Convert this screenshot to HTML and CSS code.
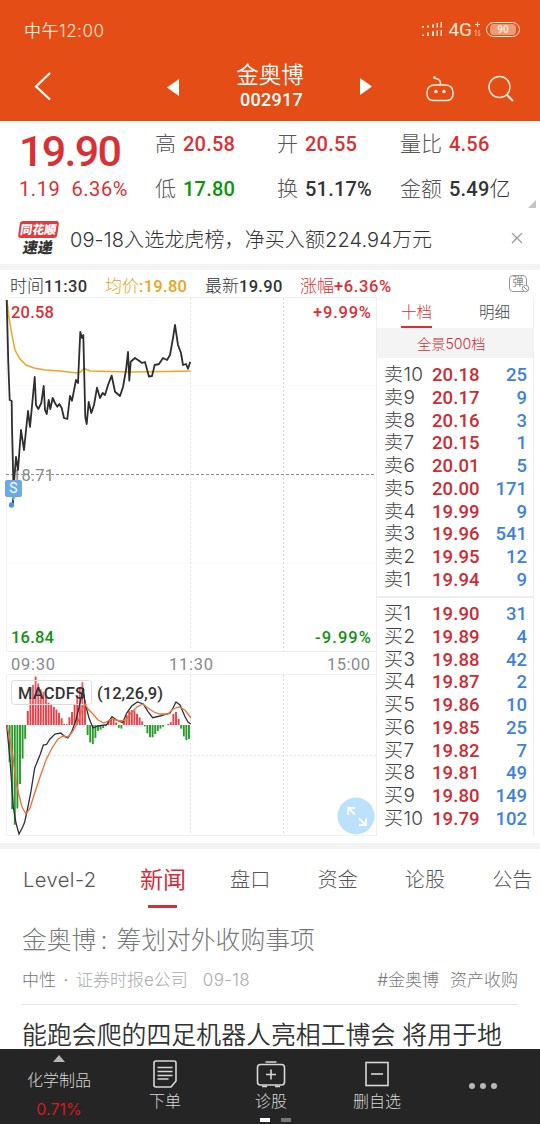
FILE: index.html
```html
<!DOCTYPE html>
<html lang="zh-CN">
<head>
    <meta charset="UTF-8">
    <meta name="viewport" content="width=device-width, initial-scale=1.0">
    <title>金奥博 002917</title>
    <link rel="stylesheet" href="styles.css">
</head>
<body>

<header class="header">
    <div class="status-bar">
        <span class="clock">中午12:00</span>
        <div class="status-icons">
            <svg width="22" height="17" viewBox="0 0 22 17" fill="#ffe9d2">
                <path d="M1 5h2v1.500H1zM6 4.500h2v2H6zM11 3.500h2v3h-2zM15.500 2h1.500v4.500h-1.500zM19.500 1H21v5.500h-1.500zM1 13.500h2V15H1zM6 11.500h2V15H6zM11 10.500h2V15h-2zM15.500 9.500h1.500V15h-1.500zM19.500 9H21v6h-1.500z"/>
            </svg>
            <span class="network">4G</span>
            <svg class="network-plus" width="7" height="17" viewBox="0 0 7 17" fill="none" stroke="#ffe9d2">
                <path d="M3.500 1v5M1 3.500h5" stroke-width="1.200"/>
                <path d="M2 15V9L.500 10.500M5 9v6l1.500-1.500" stroke-width=".7"/>
            </svg>
            <span class="battery"><span>90</span></span>
        </div>
    </div>
    <div class="nav">
        <svg class="back" width="18" height="30" viewBox="0 0 18 30" fill="none" stroke="#fff" stroke-width="2.200">
            <path d="M16 1 2 14.500l14 13"/>
        </svg>
        <svg class="prev" width="12" height="18" viewBox="0 0 12 18" fill="#fff"><path d="M12 0v17L0 8.500z"/></svg>
        <div class="stock">
            <div class="stock-name">金奥博</div>
            <div class="stock-code">002917</div>
        </div>
        <svg class="next" width="12" height="18" viewBox="0 0 12 18" fill="#fff"><path d="M0 0v17l12-8.500z"/></svg>
        <svg class="robot" width="30" height="28" viewBox="0 0 30 28" fill="none" stroke="#ffeadb" stroke-width="1.500">
            <path d="M10 10h10c5 0 8 3 8 8 0 5-2 7.500-6 7.500H8c-4 0-6-2.500-6-7.500 0-5 3-8 8-8zM15.500 10c.5-4-1-6-5-6.500"/>
            <circle cx="9.500" cy="2.500" r="1.500" fill="#ffeadb" stroke="none"/>
            <circle cx="11" cy="16.500" r="1.700" fill="#ffeadb" stroke="none"/>
            <circle cx="19" cy="16.500" r="1.700" fill="#ffeadb" stroke="none"/>
        </svg>
        <svg class="search" width="28" height="28" viewBox="0 0 28 28" fill="none" stroke="#ffeadb" stroke-width="1.500">
            <circle cx="12.500" cy="12" r="10.500"/>
            <path d="m19.500 19.500 6.500 6.500" stroke-width="2"/>
        </svg>
    </div>
</header>

<section class="quote">
    <div class="quote-main">
        <div class="price">19.90</div>
        <div class="change"><span>1.19</span><span>6.36%</span></div>
    </div>
    <div class="quote-grid">
        <div><label>高</label><b class="up">20.58</b></div>
        <div><label>开</label><b class="up">20.55</b></div>
        <div><label>量比</label><b class="up">4.56</b></div>
        <div><label>低</label><b class="down">17.80</b></div>
        <div><label>换</label><b>51.17%</b></div>
        <div><label>金额</label><b>5.49<i>亿</i></b></div>
    </div>
    <span class="corner"></span>
</section>

<section class="notice">
    <div class="badge">
        <span class="badge-top">同花顺</span>
        <span class="badge-bottom">速递</span>
    </div>
    <p class="notice-text">09-18入选龙虎榜，净买入额224.94万元</p>
    <svg width="12" height="12" viewBox="0 0 12 12" fill="none" stroke="#999" stroke-width="1.200"><path d="m1 0 10 10M11 0 1 10"/></svg>
</section>

<div class="divider"></div>

<section class="chart-info">
    <span class="info-time">时间<b>11:30</b></span>
    <span class="info-avg">均价<b>:19.80</b></span>
    <span class="info-last">最新<b>19.90</b></span>
    <span class="info-rate">涨幅<b>+6.36%</b></span>
    <div class="danmu">
        <span>弹</span>
        <svg width="9" height="9" viewBox="0 0 9 9" fill="#fff" stroke="#8f8f8f"><circle cx="4.500" cy="4.500" r="3.200"/><path d="M2.500 2.500l4 4"/></svg>
    </div>
</section>

<section class="market">
    <svg class="chart" width="376" height="546" viewBox="0 297 376 546">
        <!-- frame and grid -->
        <g class="frame">
            <path d="M6.500 297.500V651.500H376M6.500 674.500V835.500H376M6.500 297.500H376M6.500 674.500H376"/>
            <path d="M6 385.500H376M6 563.500H376" class="faint"/>
        </g>
        <g class="grid">
            <path d="M190.500 298V651M190.500 675V835M6 755.500H376"/>
            <path d="M283.500 298V651M283.500 675V835" class="mid"/>
        </g>
        <path class="zero" d="M6 474.500H375"/>

        <text class="t gray" x="12" y="481" textLength="42">18.71</text>

        <!-- intraday price -->
        <polyline class="avg" points="7,300 9,318 12,335 15,350 20,359 26,365 34,368 45,370 60,371 75,372.700 80,372.500 84,368.500 90,371 130,372 165,371.500 190.500,371"/>
        <polyline class="line" points="6.700,300 8.300,363 9.700,400 11.700,401 12,427 13.300,480 13,503 14,483 16,457 18,470 21,430 24,450 28,411 30,427 32.300,403 34.700,377 36,405 38.300,409 41.300,403 43.700,386 45,410 46.700,414 48.700,400 50.300,409 52.700,398 55,403 57.300,406.700 59.300,404 61.700,408 64,418 67.300,419 70,396 72,400.700 76,380 78,383 79,360 80.300,332 82,338 83.300,335 84.700,393 85.300,417 86.700,424 88.700,402 91.300,413 94,405 97,387.700 100,398 102.700,393 105,395 108,385 111.700,375.700 115,391.700 120,396 123,387 126,370 128,352 129.300,380.700 130.700,361.700 135,358 138,360 142,363 145,362 149,376.700 152,376 154.700,365 159,364 163,358 167,360 170,355 173,338 175,325 178,345 181,353 183,365 186,364 188,368.700 190.300,361.700"/>

        <text class="t red" x="11" y="318" textLength="43">20.58</text>
        <text class="t red" x="313" y="318" textLength="58">+9.99%</text>
        <text class="t green" x="11" y="643" textLength="43">16.84</text>
        <text class="t green" x="315" y="643" textLength="56">-9.99%</text>
        <text class="t axis" x="11" y="670" textLength="44">09:30</text>
        <text class="t axis" x="169" y="670" textLength="44">11:30</text>
        <text class="t axis" x="327" y="670" textLength="43">15:00</text>

        <!-- sell marker -->
        <rect x="5" y="480" width="17" height="17" rx="2" fill="#6ba8ec"/>
        <path d="M11 496h5l-2.500 5z" fill="#6ba8ec"/>
        <circle cx="11.500" cy="505" r="2.700" fill="#4d94e0"/>
        <text class="marker" x="13.500" y="493" text-anchor="middle">S</text>

        <!-- MACD -->
        <g id="macdBars"></g>
        <rect x="11.500" y="680.500" width="80" height="24" rx="3" class="macd-box"/>
        <polyline class="dif" points="6.700,725 10,760 13.300,807 16,823 19,834 22.700,827 24.700,822 27.300,810 30.700,793 34.700,768 40,755 43.300,745 46.500,744.500 50,739 55,734 60.700,733 65,736.700 68,738 71.700,731.700 76,720 80,703 83.300,688 85,703 89,718 93,728 98,726 106.700,724.700 112,716.700 116.700,720 122.700,722.700 126.700,713 131.700,706 137.300,702 143.300,704 148,711.700 152.700,717.700 160,716 170,713 173,708 176,702 180,705 185,716.700 188,722 190.700,724"/>
        <polyline class="dea" points="7,725 10,740 13,757 16,782 19,795 22,807 26,814 30,808 35,792 40,777 46,760 52,748 58,739 63,736 68,737 73,731 78,722 82,710 85,704 88,709 92,713 98,720 104,723 112,719 120,721 126,720 131,713 137,707 143,704 148,708 154,712 160,714 168,714 173,709 179,707 185,710 191,718"/>
        <text class="t dark" x="18" y="699" textLength="67">MACDFS</text>
        <text class="t dark" x="97" y="699" textLength="66">(12,26,9)</text>

        <!-- full screen button -->
        <circle cx="356" cy="816" r="18.500" fill="#bbe1fb"/>
        <path d="M348 815v-7h7M349 809l6 5.500M366 818v7h-7M365 824l-6-5.500" fill="none" stroke="#fff" stroke-width="1.800"/>
    </svg>

    <aside class="orders">
        <div class="order-tabs">
            <span class="active">十档</span>
            <span>明细</span>
        </div>
        <div class="order-all">全景500档</div>
        <div class="order-list" id="sellList"></div>
        <div class="order-list buy" id="buyList"></div>
    </aside>
</section>

<div class="divider"></div>

<nav class="tabs">
    <span class="level-tab">Level-2</span>
    <span class="active">新闻</span>
    <span>盘口</span>
    <span>资金</span>
    <span>论股</span>
    <span>公告</span>
</nav>

<section class="news">
    <article class="news-item read">
        <h2>金奥博<span class="colon">:</span>筹划对外收购事项</h2>
        <div class="news-meta">
            <span class="mood">中性</span>
            <span class="dot">·</span>
            <span class="source">证券时报e公司</span>
            <span class="date">09-18</span>
            <span class="tag">#金奥博</span>
            <span>资产收购</span>
        </div>
    </article>
    <article class="news-item">
        <h2>能跑会爬的四足机器人亮相工博会 将用于地</h2>
    </article>
</section>

<footer class="toolbar">
    <div class="tool sector">
        <span class="arrow-up"></span>
        <span class="tool-name">化学制品</span>
        <span class="sector-rate">0.71%</span>
    </div>
    <div class="tool">
        <svg width="26" height="28" viewBox="0 0 26 28" fill="none" stroke="#d8d8d8" stroke-width="1.600">
            <path d="M4 1h18q2 0 2 2v18l-5 6H4q-2 0-2-2V3q0-2 2-2z"/>
            <path d="M5.500 7.500h15M5.500 11.500h15M5.500 15.500h15M5.500 19h11"/>
        </svg>
        <span class="tool-name">下单</span>
    </div>
    <div class="tool">
        <svg width="30" height="28" viewBox="0 0 30 28" fill="none" stroke="#d8d8d8" stroke-width="1.600">
            <rect x="1.500" y="4.500" width="27" height="20.500" rx="3"/>
            <path d="M9.500 2h11M15 9.500v10M10 14.500h10M6 26.500h5M19 26.500h5"/>
        </svg>
        <span class="tool-name">诊股</span>
        <div class="pager"><i class="on"></i><i></i></div>
    </div>
    <div class="tool">
        <svg width="26" height="28" viewBox="0 0 26 28" fill="none" stroke="#d8d8d8" stroke-width="1.600">
            <rect x="2" y="2.500" width="22" height="23"/>
            <path d="M7 14h12"/>
        </svg>
        <span class="tool-name">删自选</span>
    </div>
    <div class="tool more"><i></i><i></i><i></i></div>
</footer>

<script>
    const sells = [
        [10, '20.18', 25], [9, '20.17', 9], [8, '20.16', 3], [7, '20.15', 1], [6, '20.01', 5],
        [5, '20.00', 171], [4, '19.99', 9], [3, '19.96', 541], [2, '19.95', 12], [1, '19.94', 9]
    ];
    const buys = [
        [1, '19.90', 31], [2, '19.89', 4], [3, '19.88', 42], [4, '19.87', 2], [5, '19.86', 10],
        [6, '19.85', 25], [7, '19.82', 7], [8, '19.81', 49], [9, '19.80', 149], [10, '19.79', 102]
    ];

    function renderOrders(id, name, rows) {
        document.getElementById(id).innerHTML = rows.map(r =>
            `<div class="order"><span class="level">${name}${r[0]}</span><span class="order-price">${r[1]}</span><span class="volume">${r[2]}</span></div>`
        ).join('');
    }

    renderOrders('sellList', '卖', sells);
    renderOrders('buyList', '买', buys);

    // MACD histogram: [x, height], positive is above the zero line
    const macd = [
        [7, -2], [9, -25], [11, -65], [13, -97], [15, -100], [17, -87], [19, -70], [21, -48], [23, -30], [26, -8],
        [27, 10], [30, 25], [33, 40], [35, 50], [38, 42], [41, 35], [45, 32], [48, 23], [52, 20], [56, 16], [60, 11],
        [63, 3], [66, -2], [68, 5], [72, 13], [75, 22], [78, 30], [80, 38], [83, 44], [85.5, 20], [86.5, -6], [89, -15],
        [92, -21], [95, -14], [98, -6], [102, -4], [106, -1], [108, 3], [112, 8], [116, 3], [118, -2], [121, -5],
        [123, 2], [126, 9], [130, 15], [134, 15], [138, 10], [142, 4], [144, 1], [146, -5], [149, -12], [152, -13],
        [156, -8], [160, -4], [164, -1], [168, 1], [171, 3], [173, 10], [175, 15], [177, 11], [179, 5], [181, -3],
        [184, -12], [187, -16], [191, -12]
    ];
    const zero = 725;
    let bars = '';
    for (let x = 7; x < 191; x += 2.6) {
        const i = macd.findIndex(p => p[0] > x);
        const a = macd[i - 1], b = macd[i];
        const h = a[1] + (b[1] - a[1]) * (x - a[0]) / (b[0] - a[0]);
        bars += `<path d="M${x.toFixed(1)} ${zero}v${(-h).toFixed(1)}" stroke="${h > 0 ? '#e8404a' : '#2a9a2a'}"/>`;
    }
    document.getElementById('macdBars').innerHTML = bars;
</script>

</body>
</html>
```
FILE: styles.css
```css
* {
    box-sizing: border-box;
}

body {
    margin: 0;
    width: 540px;
    height: 1124px;
    overflow: hidden;
    display: flex;
    flex-direction: column;
    background: #fff;
    color: #333;
    font-family: Inter, "Noto Sans CJK SC", sans-serif;
    font-weight: 300;
    white-space: nowrap;
}

b {
    font-family: Roboto, sans-serif;
    font-weight: 500;
}

i {
    font-style: normal;
}

svg {
    display: block;
    flex: none;
}

/* Header */
.header {
    height: 121px;
    flex: none;
    background: #e54d17;
    color: #fff;
}

.status-bar {
    height: 59px;
    padding: 0 20px 0 24px;
    display: flex;
    align-items: center;
    justify-content: space-between;
    color: #ffe9d2;
}

.clock {
    font-size: 17px;
    font-weight: 350;
    letter-spacing: 0.5px;
}

.status-icons {
    display: flex;
    align-items: center;
}

.network {
    margin-left: 5px;
    font: 400 19px Roboto, sans-serif;
}

.network-plus {
    margin: 0 5px 0 2px;
}

.battery {
    width: 34px;
    height: 15px;
    border: 1.5px solid #ffe9d2;
    border-radius: 8px;
    display: flex;
    justify-content: center;
}

.battery span {
    width: 26px;
    margin: 1px;
    border-radius: 4px;
    background: #f09a78;
    font: 700 10px/11px Roboto, sans-serif;
    text-align: center;
}

.nav {
    height: 62px;
    display: flex;
    align-items: center;
    padding: 0 25px 6px 34px;
}

.prev {
    margin-left: 115px;
    margin-top: 1px;
}

.stock {
    width: 181px;
    padding-left: 1px;
    text-align: center;
}

.stock-name {
    margin-top: -2px;
    font-size: 22.5px;
    line-height: 27px;
    font-weight: 350;
}

.stock-code {
    font: 500 18px/24px Roboto, sans-serif;
    padding-left: 3px;
    letter-spacing: 0.3px;
}

.robot {
    margin: 3px 0 0 53px;
}

.search {
    margin: 3px 0 0 32px;
}

/* Quote */
.quote {
    height: 87px;
    flex: none;
    display: flex;
    position: relative;
}

.quote-main {
    width: 155px;
    padding: 7px 0 0 19px;
    color: #d93036;
    font-family: Roboto, sans-serif;
}

.price {
    font-size: 43px;
    font-weight: 500;
    line-height: 46px;
    letter-spacing: -1.7px;
}

.change {
    display: flex;
    gap: 11px;
    font-size: 20px;
    line-height: 30px;
    letter-spacing: 0.6px;
    font-weight: 400;
}

.quote-grid {
    display: grid;
    grid-template-columns: 122px 123px 130px;
    grid-template-rows: 45px 45px;
}

.quote-grid div {
    display: flex;
    align-items: center;
    gap: 7px;
    font-size: 21px;
    line-height: 45px;
}

.quote-grid label {
    color: #555;
}

.quote-grid b {
    font-size: 20px;
    padding-top: 2px;
    letter-spacing: 0.2px;
}

.quote-grid i {
    font-family: "Noto Sans CJK SC", sans-serif;
    font-weight: 300;
    font-size: 21px;
    line-height: 20px;
}

.up {
    color: #d93036;
}

.down {
    color: #0a940a;
}

.corner {
    position: absolute;
    right: 4px;
    bottom: 0;
    border: solid transparent;
    border-width: 0 0 8px 8px;
    border-bottom-color: #c4c4c4;
}

/* Notice */
.notice {
    height: 56px;
    flex: none;
    display: flex;
    align-items: center;
    padding: 5px 17px 0 18px;
    justify-content: space-between;
}

.notice-text {
    margin: -1px 0 0 12px;
    flex: 1;
    font-size: 20px;
    letter-spacing: 0.1px;
}

.badge {
    width: 40px;
    display: flex;
    flex-direction: column;
    align-items: center;
    font-family: "Noto Sans CJK SC", sans-serif;
    font-weight: 900;
}

.badge-top {
    width: 39px;
    height: 17px;
    border-radius: 3px;
    background: #df3a3e;
    color: #fff;
    font-size: 12px;
    line-height: 16px;
    text-align: center;
    transform: skewX(-8deg);
}

.badge-bottom {
    font-size: 15px;
    line-height: 18px;
    transform: skewX(-10deg);
}

.divider {
    height: 6px;
    flex: none;
    background: #f4f4f4;
}

/* Chart */
.chart-info {
    height: 27px;
    flex: none;
    display: flex;
    align-items: center;
    padding: 1px 12px 0 10px;
    font-size: 17px;
}

.chart-info b {
    font-size: 16.5px;
    letter-spacing: 0.3px;
}

.info-time {
    width: 95px;
}

.info-avg {
    width: 100px;
    color: #e6a522;
}

.info-last {
    width: 95px;
}

.info-rate {
    color: #d93036;
}

.info-rate b {
    letter-spacing: 0.6px;
}

.danmu {
    position: relative;
    margin: -2px 1px 0 auto;
    width: 18px;
    height: 17px;
    border: 1.5px solid #999;
    border-radius: 4px;
    color: #888;
    font-size: 11px;
    font-weight: 400;
    line-height: 13px;
    text-align: center;
}

.danmu svg {
    position: absolute;
    right: -4px;
    bottom: -2px;
}

.market {
    height: 546px;
    flex: none;
    display: flex;
}

.frame path,
.grid path,
.zero,
.chart polyline {
    fill: none;
}

.frame {
    stroke: #f0f0f0;
}

.frame .faint {
    stroke: #fafafa;
}

.grid {
    stroke: #e6e6e6;
    stroke-dasharray: 2 2;
}

.grid .mid {
    stroke: #d8d8d8;
}

.zero {
    stroke: #8c8c8c;
    stroke-dasharray: 3 2;
}

.avg {
    stroke: #eea526;
    stroke-width: 1.5;
}

.line {
    stroke: #2e2e2e;
    stroke-width: 1.8;
    stroke-linejoin: round;
}

.dif {
    stroke: #30303c;
    stroke-width: 1.3;
}

.dea {
    stroke: #ee6f3c;
    stroke-width: 1.3;
}

#macdBars {
    stroke-width: 1.9;
}

.macd-box {
    fill: rgba(255, 255, 255, 0.15);
    stroke: #dcdcdc;
}

.t {
    font: 500 16.5px Roboto, sans-serif;
}

.red {
    fill: #d93036;
}

.green {
    fill: #149014;
}

.gray,
.axis {
    fill: #8a8a8a;
    font-weight: 400;
}

.dark {
    fill: #333;
    font-weight: 500;
}

.marker {
    fill: #fff;
    font: 400 14px Roboto, sans-serif;
}

/* Orders */
.orders {
    width: 158px;
    height: 539px;
    border: solid #eee;
    border-width: 0 1px;
}

.order-tabs {
    height: 31px;
    display: flex;
    justify-content: space-between;
    padding: 0 23px 0 24px;
    font-size: 15.5px;
    line-height: 31px;
    color: #444;
}

.order-tabs .active {
    color: #d93036;
    border-bottom: 2px solid #d93036;
}

.order-all {
    height: 30px;
    background: #f4f4f4;
    color: #c92f38;
    font-size: 14.2px;
    line-height: 31px;
    padding-left: 40px;
}

.order-list {
    padding: 6px 6px 0 7px;
    height: 238px;
}

.order-list.buy {
    padding-top: 5px;
    border-top: 2px solid #eee;
}

.order {
    display: flex;
    height: 22.75px;
    font: 500 18.5px/22.75px Roboto, sans-serif;
}

.level {
    width: 48px;
    font-family: Inter, "Noto Sans CJK SC", sans-serif;
    font-weight: 300;
    font-size: 19px;
    letter-spacing: 0.4px;
    color: #444;
}

.order-price {
    color: #ce2b35;
    letter-spacing: 0.1px;
}

.volume {
    margin-left: auto;
    color: #3f82d8;
}

/* Tabs */
.tabs {
    height: 63px;
    flex: none;
    display: flex;
    align-items: flex-start;
    gap: 47px;
    padding-left: 23px;
    font-size: 20.2px;
    line-height: 62px;
    color: #555;
}

.level-tab {
    width: 73px;
    letter-spacing: 0.4px;
}

.tabs .active {
    position: relative;
    margin: 0 -3px;
    font-size: 23px;
    font-weight: 400;
    color: #d0303a;
}

.tabs .active::after {
    content: "";
    position: absolute;
    left: 8px;
    bottom: 3px;
    width: 29px;
    height: 3px;
    background: #d0303a;
}

/* News */
.news {
    height: 137px;
    flex: none;
    overflow: hidden;
    padding: 0 22px;
}

.news-item h2 {
    margin: 0;
    font-size: 24.9px;
    font-weight: 350;
    line-height: 61px;
}

.news-item.read {
    height: 93px;
    border-bottom: 1px solid #e6e6e6;
}

.news-item.read h2 {
    font-size: 24.8px;
    font-weight: 300;
    line-height: 57px;
    color: #777;
}

.colon {
    display: inline-block;
    width: 20px;
    padding-left: 4px;
}

.news-meta {
    display: flex;
    font-size: 17px;
    line-height: 22px;
    color: #777;
}

.dot {
    width: 20px;
    text-align: center;
}

.source,
.date {
    color: #aaa;
}

.date {
    margin-left: 15px;
    letter-spacing: 0.3px;
}

.tag {
    margin: 0 11px 0 auto;
}

/* Toolbar */
.toolbar {
    height: 75px;
    flex: none;
    display: flex;
    background: #252525;
    color: #d8d8d8;
}

.tool {
    width: 106px;
    padding: 11px 0 0;
    display: flex;
    flex-direction: column;
    align-items: center;
    position: relative;
    font-size: 16px;
}

.tool:first-child {
    width: 118px;
    margin-right: -6px;
}

.tool-name {
    line-height: 26px;
}

.sector {
    padding-top: 6px;
}

.arrow-up {
    border: solid transparent;
    border-width: 0 6px 7px;
    border-bottom-color: #b5b5b5;
}

.sector .tool-name {
    line-height: 36px;
}

.sector-rate {
    color: #d81820;
    font-weight: 400;
    line-height: 22px;
}

.pager {
    position: absolute;
    bottom: 2px;
    left: 42px;
    display: flex;
    gap: 11px;
}

.pager i {
    width: 10px;
    height: 4px;
    background: #777;
}

.pager .on {
    background: #fff;
}

.tool.more {
    flex-direction: row;
    justify-content: center;
    gap: 5px;
    padding: 0 0 2px;
}

.more i {
    width: 6px;
    height: 6px;
    border-radius: 50%;
    background: #b8b8b8;
}
```
